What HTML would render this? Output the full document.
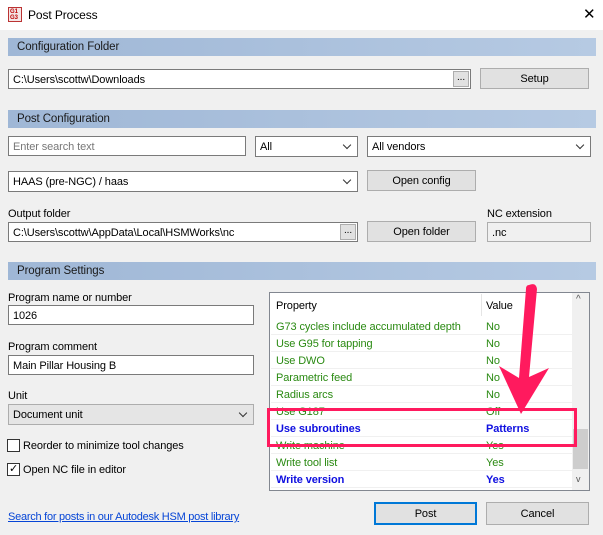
<!DOCTYPE html>
<html><head><meta charset="utf-8"><style>
*{box-sizing:border-box;margin:0;padding:0}
body{width:603px;height:535px;background:#f0f0f0;font-family:"Liberation Sans",sans-serif;font-size:11px;letter-spacing:-0.1px;color:#000;position:relative;overflow:hidden}
.a{position:absolute}
.hdr{position:absolute;left:8px;width:588px;height:18px;background:linear-gradient(90deg,#9fb7d6,#b6cae3);padding:3px 0 0 9px;font-size:11.5px;color:#1a1a1a}
.inp{position:absolute;background:#fff;border:1px solid #7a7a7a;height:20px;padding:4px 4px;white-space:nowrap;overflow:hidden}
.btn{position:absolute;background:#e1e1e1;border:1px solid #adadad;height:21px;text-align:center;padding-top:4px}
.cmb{position:absolute;background:#e5e5e5;border:1px solid #adadad;height:21px;padding:4px 4px}
.cmb:after{content:"";position:absolute;right:7px;top:5px;width:5px;height:5px;border-right:1px solid #333;border-bottom:1px solid #333;transform:rotate(45deg)}
.dots{position:absolute;right:1px;top:1px;width:16px;height:16px;border:1px solid #adadad;background:#e1e1e1;font-size:10px;text-align:center;line-height:12px}
.lbl{position:absolute}
.row{position:absolute;left:271px;width:301px;height:17px;border-bottom:1px solid #f0f0f0;color:#2a8a12}
.row span{position:absolute;top:3px}
.row .p{left:5px}.row .v{left:215px}
.row.b{color:#1010e0;font-weight:bold}
.cb{position:absolute;width:13px;height:13px;border:1px solid #333;background:#fff}
</style></head><body>
<div class="a" style="left:0;top:0;width:603px;height:30px;background:#fff"></div>
<div class="a" style="left:8px;top:7px;width:14px;height:15px;background:#f4e6e6;border:1px solid #b33;font-size:6px;line-height:6px;color:#b00;font-weight:bold;padding:1px">G1<br>G3</div>
<div class="a" style="left:28px;top:8px;font-size:12px">Post Process</div>
<div class="a" style="left:583px;top:5px;font-size:15px;font-weight:300">✕</div>

<div class="hdr" style="top:38px">Configuration Folder</div>
<div class="inp" style="left:8px;top:69px;width:463px">C:\Users\scottw\Downloads<div class="dots">...</div></div>
<div class="btn" style="left:480px;top:68px;width:109px">Setup</div>

<div class="hdr" style="top:110px">Post Configuration</div>
<div class="inp" style="left:8px;top:136px;width:238px;color:#777">Enter search text</div>
<div class="cmb" style="left:255px;top:136px;width:103px;background:#fff;border-color:#7a7a7a">All</div>
<div class="cmb" style="left:367px;top:136px;width:224px;background:#fff;border-color:#7a7a7a">All vendors</div>
<div class="cmb" style="left:8px;top:171px;width:350px;background:#fff;border-color:#7a7a7a">HAAS (pre-NGC) / haas</div>
<div class="btn" style="left:367px;top:170px;width:109px">Open config</div>

<div class="lbl" style="left:8px;top:208px">Output folder</div>
<div class="inp" style="left:8px;top:222px;width:350px">C:\Users\scottw\AppData\Local\HSMWorks\nc<div class="dots">...</div></div>
<div class="btn" style="left:367px;top:221px;width:109px">Open folder</div>
<div class="lbl" style="left:487px;top:208px">NC extension</div>
<div class="inp" style="left:487px;top:222px;width:104px;background:#f0f0f0;border-color:#adadad">.nc</div>

<div class="hdr" style="top:262px">Program Settings</div>
<div class="lbl" style="left:8px;top:292px">Program name or number</div>
<div class="inp" style="left:8px;top:305px;width:246px">1026</div>
<div class="lbl" style="left:8px;top:341px">Program comment</div>
<div class="inp" style="left:8px;top:355px;width:246px">Main Pillar Housing B</div>
<div class="lbl" style="left:8px;top:390px">Unit</div>
<div class="cmb" style="left:8px;top:404px;width:246px">Document unit</div>
<div class="cb" style="left:7px;top:439px"></div><div class="lbl" style="left:23px;top:440px">Reorder to minimize tool changes</div>
<div class="cb" style="left:7px;top:463px;font-size:11px;line-height:11px;text-align:center">✓</div><div class="lbl" style="left:23px;top:464px">Open NC file in editor</div>

<div class="a" style="left:269px;top:292px;width:321px;height:199px;background:#fff;border:1px solid #828790"></div>
<div class="a" style="left:276px;top:300px">Property</div>
<div class="a" style="left:481px;top:294px;width:1px;height:22px;background:#e5e5e5"></div>
<div class="a" style="left:486px;top:300px">Value</div>
<div class="a" style="left:572px;top:293px;width:17px;height:197px;background:#f0f0f0"></div>
<div class="a" style="left:573px;top:429px;width:15px;height:40px;background:#cdcdcd"></div>
<div class="a" style="left:576px;top:294px;font-size:10px;color:#555">^</div>
<div class="a" style="left:576px;top:474px;font-size:9px;color:#555">v</div>
<div class="row" style="top:318px"><span class="p">G73 cycles include accumulated depth</span><span class="v">No</span></div>
<div class="row" style="top:335px"><span class="p">Use G95 for tapping</span><span class="v">No</span></div>
<div class="row" style="top:352px"><span class="p">Use DWO</span><span class="v">No</span></div>
<div class="row" style="top:369px"><span class="p">Parametric feed</span><span class="v">No</span></div>
<div class="row" style="top:386px"><span class="p">Radius arcs</span><span class="v">No</span></div>
<div class="row" style="top:403px"><span class="p">Use G187</span><span class="v">Off</span></div>
<div class="row b" style="top:420px"><span class="p">Use subroutines</span><span class="v">Patterns</span></div>
<div class="row" style="top:437px"><span class="p">Write machine</span><span class="v">Yes</span></div>
<div class="row" style="top:454px"><span class="p">Write tool list</span><span class="v">Yes</span></div>
<div class="row b" style="top:471px"><span class="p">Write version</span><span class="v">Yes</span></div>

<svg class="a" style="left:0;top:0" width="603" height="535">
<rect x="268.5" y="409.5" width="307" height="36" fill="none" stroke="#ff1a5e" stroke-width="3"/>
<path d="M529 285 Q536 282 537 289 L529 377 L549 368 L521 414 L499 366 L519 378 L526 289 Q526 285 529 285Z" fill="#ff1a5e"/>
</svg>

<div class="a" style="left:8px;top:511px;color:#0645d6;text-decoration:underline;letter-spacing:-0.25px">Search for posts in our Autodesk HSM post library</div>
<div class="btn" style="left:374px;top:502px;width:103px;height:23px;border:2px solid #0078d7;padding-top:4px">Post</div>
<div class="btn" style="left:486px;top:502px;width:103px;height:23px;padding-top:5px">Cancel</div>
</body></html>
